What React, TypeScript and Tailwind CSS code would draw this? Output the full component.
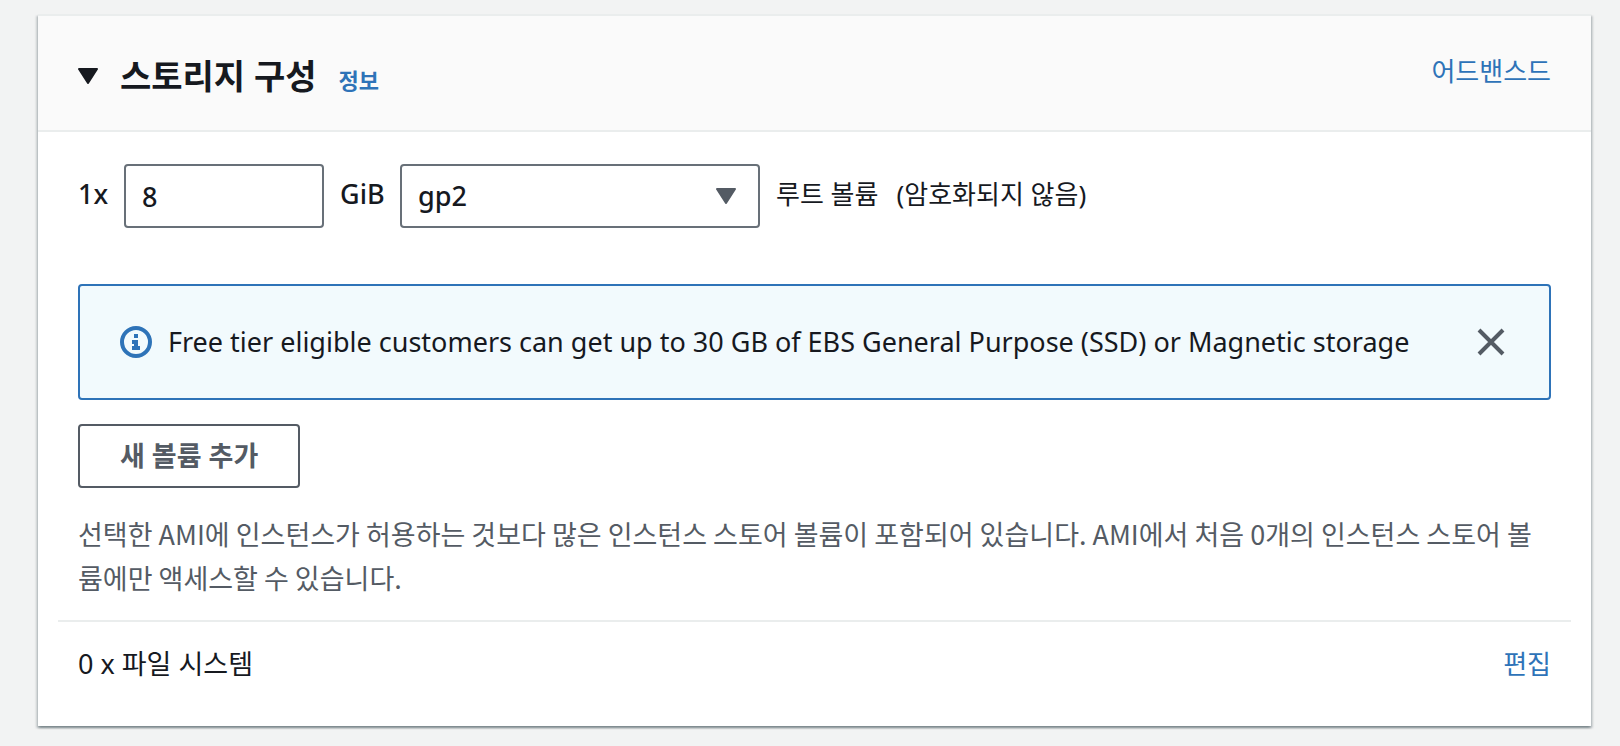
import { useState } from "react";

function Triangle({ className }: { className: string }) {
  return (
    <svg viewBox="0 0 20 16" className={className} fill="currentColor" stroke="currentColor" strokeWidth="2" strokeLinejoin="round" aria-hidden="true">
      <path d="M1 1H19L10 15Z" />
    </svg>
  );
}

function InfoIcon() {
  return (
    <svg viewBox="0 0 32 32" className="size-8 shrink-0" fill="none" aria-hidden="true">
      <circle cx="16" cy="16" r="14" stroke="currentColor" strokeWidth="4" />
      <path d="M14 8h4v4h-4zM12 14h6v6h2v4h-8v-4h2v-2h-2z" fill="currentColor" />
    </svg>
  );
}

export default function App() {
  const [size, setSize] = useState("8");
  const [open, setOpen] = useState(true);
  const [notice, setNotice] = useState(true);

  return (
    <main className="min-h-screen bg-[#f2f3f3] pt-[14px] pr-[29px] pb-5 pl-[38px] font-['Noto_Sans','Noto_Sans_CJK_KR',sans-serif] text-[27px] leading-[44px] text-[#16191f]">
      <section className="bg-white shadow-[0_2px_2px_0_rgba(0,28,36,0.3),2px_2px_2px_0_rgba(0,28,36,0.15),-2px_2px_2px_0_rgba(0,28,36,0.15)]">
        <header className="flex items-start justify-between border-y-2 border-[#eaeded] bg-[#fafafa] px-10 pt-[38px] pb-7">
          <div className="flex items-baseline">
            <h2 className="text-[34px] font-bold">
              <button type="button" aria-expanded={open} onClick={() => setOpen(!open)} className="flex items-baseline gap-[22px]">
                <Triangle className="h-4 w-5 self-center" />
                스토리지 구성
              </button>
            </h2>
            <a href="#info" className="ml-[22px] text-[22px] font-bold text-[#2e73b8]">정보</a>
          </div>
          <a href="#advanced" className="text-[26px] leading-[34px] text-[#2e73b8]">어드밴스드</a>
        </header>

        {open && (
          <div className="px-5 pt-8 pb-10">
            <div className="px-5">
              <div className="flex items-center">
                <label htmlFor="size" className="w-[46px] pb-1 font-medium">1x</label>
                <input id="size" value={size} onChange={(e) => setSize(e.target.value)} className="h-16 w-[200px] rounded-[4px] border-2 border-[#687078] bg-white px-4 font-medium" />
                <label htmlFor="type" className="w-[76px] pb-1 pl-4 font-medium">GiB</label>
                <div className="relative w-[360px]">
                  <select id="type" defaultValue="gp2" className="h-16 w-full appearance-none rounded-[4px] border-2 border-[#687078] bg-white px-4 font-medium">
                    <option>gp2</option>
                    <option>gp3</option>
                    <option>io1</option>
                    <option>io2</option>
                  </select>
                  <Triangle className="pointer-events-none absolute top-6 right-6 h-4 w-5 text-[#545b64]" />
                </div>
                <span className="ml-4 pb-1 text-[26px]">루트 볼륨</span>
                <span className="ml-[18px] pb-1 text-[26px]">(암호화되지 않음)</span>
              </div>

              {notice && (
                <div role="status" className="mt-14 flex min-h-[116px] items-center gap-4 rounded-[4px] border-2 border-[#2e73b8] bg-[#f2fafd] pr-11 pl-10 text-[#2e73b8]">
                  <InfoIcon />
                  <p className="flex-1 text-[#16191f]">Free tier eligible customers can get up to 30 GB of EBS General Purpose (SSD) or Magnetic storage</p>
                  <button type="button" aria-label="닫기" onClick={() => setNotice(false)} className="text-[#545b64]">
                    <svg viewBox="0 0 28 28" className="size-7" fill="none" stroke="currentColor" strokeWidth="4" aria-hidden="true">
                      <path d="M2 2L26 26M26 2L2 26" />
                    </svg>
                  </button>
                </div>
              )}

              <button type="button" className="mt-6 h-16 rounded-[4px] border-2 border-[#545b64] bg-white px-10 leading-[40px] font-bold text-[#545b64]">새 볼륨 추가</button>

              <p className="mt-6 font-['Noto_Sans_CJK_KR',sans-serif] text-[#545b64]">
                선택한 AMI에 인스턴스가 허용하는 것보다 많은 인스턴스 스토어 볼륨이 포함되어 있습니다. AMI에서 처음 0개의 인스턴스 스토어 볼륨에만 액세스할 수 있습니다.
              </p>
            </div>

            <div className="mt-5 flex items-center justify-between border-t-2 border-[#eaeded] px-5 pt-5">
              <span>0 x 파일 시스템</span>
              <a href="#edit" className="text-[26px] text-[#2e73b8]">편집</a>
            </div>
          </div>
        )}
      </section>
    </main>
  );
}
